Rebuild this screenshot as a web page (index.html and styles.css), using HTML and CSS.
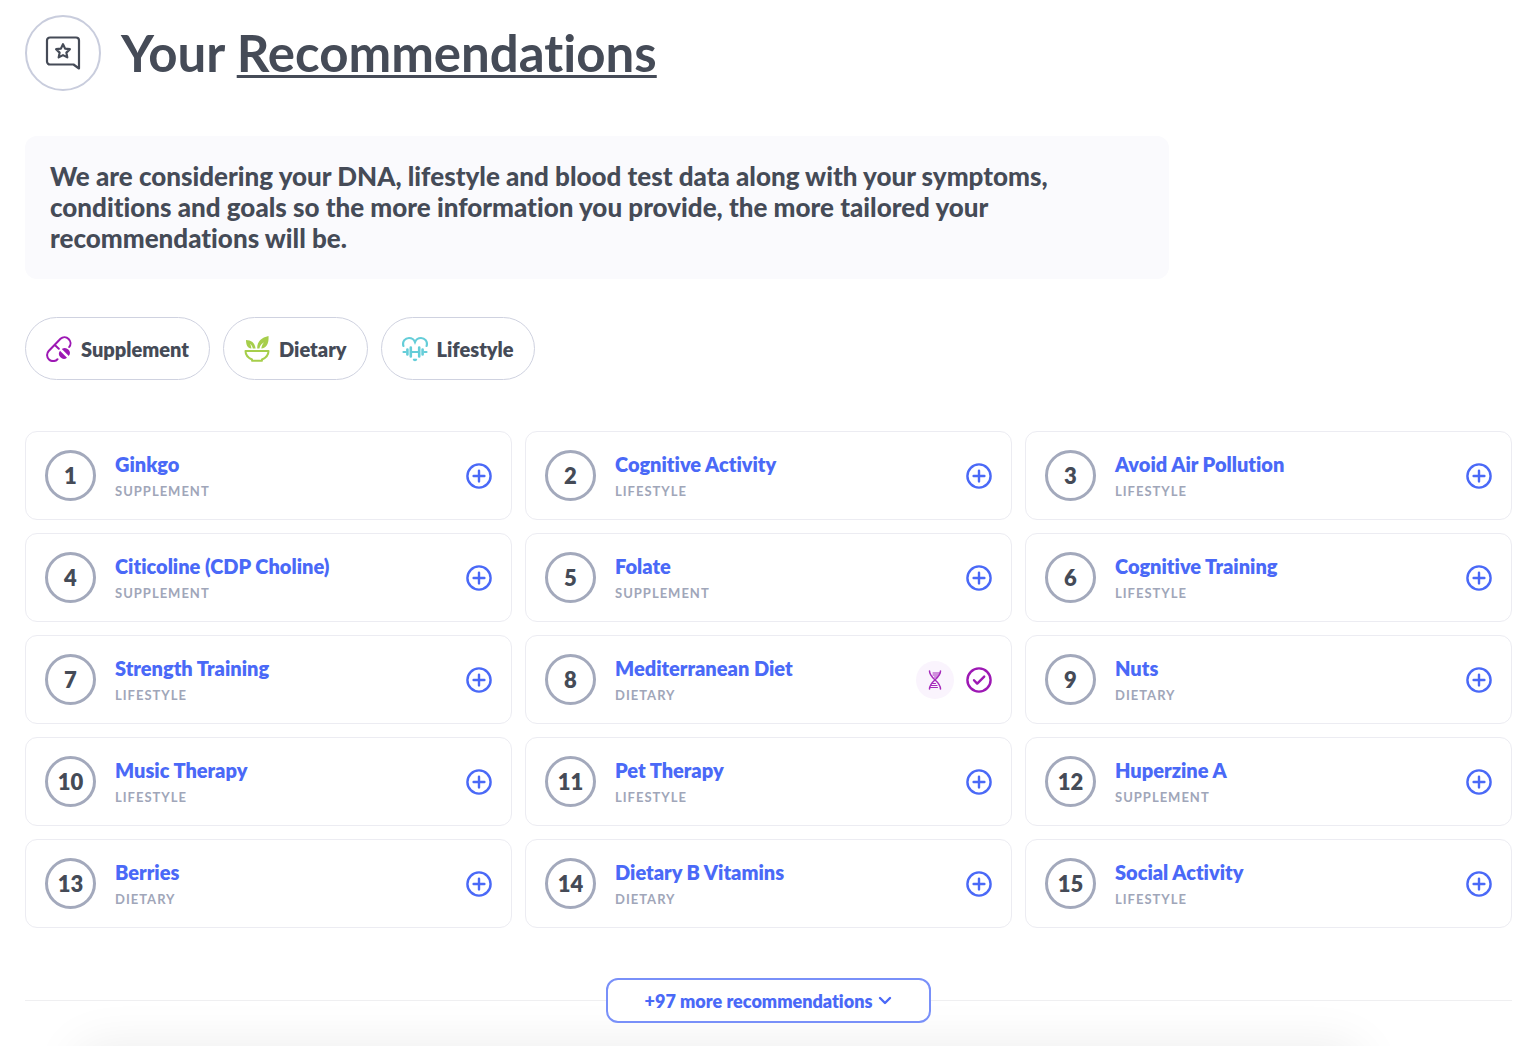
FILE: index.html
```
<!DOCTYPE html>
<html lang="en">
<head>
<meta charset="utf-8">
<title>Your Recommendations</title>
<meta name="viewport" content="width=device-width, initial-scale=1">
<link rel="stylesheet" href="styles.css">
</head>
<body>
<svg class="sprite" aria-hidden="true">
  <symbol id="plus" viewBox="0 0 26 26"><g fill="none" stroke="currentColor" stroke-width="2.4" stroke-linecap="round"><circle cx="13" cy="13" r="11.6"/><path d="M13 7.6v10.8M7.6 13h10.8"/></g></symbol>
  <symbol id="check" viewBox="0 0 26 26"><g fill="none" stroke="currentColor" stroke-width="2.4" stroke-linecap="round" stroke-linejoin="round"><circle cx="13" cy="13" r="11.6"/><path d="M8 13.200l3.200 3.400 7-7"/></g></symbol>
</svg>
<main class="page">
  <header class="heading">
    <span class="heading-icon">
      <svg width="36" height="36" viewBox="0 0 36 36" fill="none" stroke="currentColor" stroke-width="2.200" stroke-linejoin="round" aria-hidden="true">
        <path d="M5 2.500h26a3 3 0 0 1 3 3v28l-5.500-4H5a3 3 0 0 1-3-3v-21a3 3 0 0 1 3-3z"/>
        <path d="M18 9.200l2.100 4.400 4.800.6-3.500 3.400.9 4.800-4.300-2.300-4.300 2.300.9-4.800-3.500-3.400 4.800-.6z"/>
      </svg>
    </span>
    <h1 class="title">Your <span class="underlined">Recommendations</span></h1>
  </header>

  <p class="intro">We are considering your DNA, lifestyle and blood test data along with your symptoms, conditions and goals so the more information you provide, the more tailored your recommendations will be.</p>

  <div class="filters">
    <button type="button" class="filter">
      <svg class="filter-icon supplement" viewBox="0 0 26 26" aria-hidden="true">
        <g fill="none" stroke="currentColor" stroke-width="2" stroke-linecap="round"><path d="M11.500 23.200a6 6 0 0 1-8.800-8.200L14.500 2.800a6 6 0 0 1 8.700 8.200M8.800 9l4 3.800"/></g>
        <path fill="currentColor" d="M14 14.800a5 5 0 0 0 7 7zM15.800 13.100a5 5 0 0 1 7 7z"/>
      </svg>
      Supplement
    </button>
    <button type="button" class="filter">
      <svg class="filter-icon dietary" viewBox="0 0 26 26" aria-hidden="true">
        <path fill="none" stroke="currentColor" stroke-width="2" stroke-linejoin="round" d="M1.500 15h23c0 4.500-3 7-6.500 8.500v1.300H8v-1.300C4.500 22 1.500 19.500 1.500 15z"/>
        <path fill="currentColor" fill-rule="evenodd" d="M2 4c5 .2 9 2.500 9.600 8.600H8.800C8.600 10.500 7.600 9 6 8c1 1.500 1.400 3 1.400 4.600C3.500 12 2 9 2 4zM24.500 0c.5 7-1.500 12-7.200 12.600.2-2 1.200-4.500 2.700-6.300-2.400 1.300-4 3.500-4.600 6.300h-2.200C13 5.500 17.500 1.500 24.500 0z"/>
      </svg>
      Dietary
    </button>
    <button type="button" class="filter">
      <svg class="filter-icon lifestyle" viewBox="0 0 26 26" aria-hidden="true">
        <g fill="none" stroke="currentColor" stroke-width="2.200" stroke-linecap="round"><path d="M1.400 10C0 5 3.500 2 7 2c3 0 5 1.500 6 4 1-2.500 3-4 6-4 3.500 0 7 3 5.600 8M9 16h8M1.500 16h2M22.500 16h2M12 23.600q1 .8 2 0"/><path stroke-width="2.600" d="M5.400 13.500v5M8.800 11.500v9M17.200 11.500v9M20.600 13.500v5"/></g>
      </svg>
      Lifestyle
    </button>
  </div>

  <ol class="cards">
    <li class="card"><span class="rank">1</span><div class="info"><a class="name" href="#ginkgo">Ginkgo</a><span class="kind">Supplement</span></div><button type="button" class="toggle" aria-label="Add Ginkgo"><svg><use href="#plus"/></svg></button></li>
    <li class="card"><span class="rank">2</span><div class="info"><a class="name" href="#cognitive-activity">Cognitive Activity</a><span class="kind">Lifestyle</span></div><button type="button" class="toggle" aria-label="Add Cognitive Activity"><svg><use href="#plus"/></svg></button></li>
    <li class="card"><span class="rank">3</span><div class="info"><a class="name" href="#avoid-air-pollution">Avoid Air Pollution</a><span class="kind">Lifestyle</span></div><button type="button" class="toggle" aria-label="Add Avoid Air Pollution"><svg><use href="#plus"/></svg></button></li>
    <li class="card"><span class="rank">4</span><div class="info"><a class="name" href="#citicoline">Citicoline (CDP Choline)</a><span class="kind">Supplement</span></div><button type="button" class="toggle" aria-label="Add Citicoline"><svg><use href="#plus"/></svg></button></li>
    <li class="card"><span class="rank">5</span><div class="info"><a class="name" href="#folate">Folate</a><span class="kind">Supplement</span></div><button type="button" class="toggle" aria-label="Add Folate"><svg><use href="#plus"/></svg></button></li>
    <li class="card"><span class="rank">6</span><div class="info"><a class="name" href="#cognitive-training">Cognitive Training</a><span class="kind">Lifestyle</span></div><button type="button" class="toggle" aria-label="Add Cognitive Training"><svg><use href="#plus"/></svg></button></li>
    <li class="card"><span class="rank">7</span><div class="info"><a class="name" href="#strength-training">Strength Training</a><span class="kind">Lifestyle</span></div><button type="button" class="toggle" aria-label="Add Strength Training"><svg><use href="#plus"/></svg></button></li>
    <li class="card"><span class="rank">8</span><div class="info"><a class="name" href="#mediterranean-diet">Mediterranean Diet</a><span class="kind">Dietary</span></div>
      <span class="dna"><svg width="14" height="20" viewBox="0 0 14 20" fill="none" stroke="currentColor" stroke-width="1.500" stroke-linecap="round" aria-hidden="true"><path d="M1.500 1c0 8 11 9.500 11 18M12.500 1c0 8-11 9.500-11 18"/><path stroke-width="1" d="M5 3h7M5 5h6M6.500 7h3M4.500 13.500h3M3 15.500h6M2.500 17.500h7"/></svg></span>
      <button type="button" class="toggle added" aria-label="Remove Mediterranean Diet"><svg><use href="#check"/></svg></button></li>
    <li class="card"><span class="rank">9</span><div class="info"><a class="name" href="#nuts">Nuts</a><span class="kind">Dietary</span></div><button type="button" class="toggle" aria-label="Add Nuts"><svg><use href="#plus"/></svg></button></li>
    <li class="card"><span class="rank">10</span><div class="info"><a class="name" href="#music-therapy">Music Therapy</a><span class="kind">Lifestyle</span></div><button type="button" class="toggle" aria-label="Add Music Therapy"><svg><use href="#plus"/></svg></button></li>
    <li class="card"><span class="rank">11</span><div class="info"><a class="name" href="#pet-therapy">Pet Therapy</a><span class="kind">Lifestyle</span></div><button type="button" class="toggle" aria-label="Add Pet Therapy"><svg><use href="#plus"/></svg></button></li>
    <li class="card"><span class="rank">12</span><div class="info"><a class="name" href="#huperzine-a">Huperzine A</a><span class="kind">Supplement</span></div><button type="button" class="toggle" aria-label="Add Huperzine A"><svg><use href="#plus"/></svg></button></li>
    <li class="card"><span class="rank">13</span><div class="info"><a class="name" href="#berries">Berries</a><span class="kind">Dietary</span></div><button type="button" class="toggle" aria-label="Add Berries"><svg><use href="#plus"/></svg></button></li>
    <li class="card"><span class="rank">14</span><div class="info"><a class="name" href="#dietary-b-vitamins">Dietary B Vitamins</a><span class="kind">Dietary</span></div><button type="button" class="toggle" aria-label="Add Dietary B Vitamins"><svg><use href="#plus"/></svg></button></li>
    <li class="card"><span class="rank">15</span><div class="info"><a class="name" href="#social-activity">Social Activity</a><span class="kind">Lifestyle</span></div><button type="button" class="toggle" aria-label="Add Social Activity"><svg><use href="#plus"/></svg></button></li>
  </ol>

  <div class="more-row">
    <button type="button" class="more">+97 more recommendations
      <svg width="14" height="10" viewBox="0 0 14 10" fill="none" stroke="currentColor" stroke-width="2.400" stroke-linecap="round" stroke-linejoin="round" aria-hidden="true"><path d="M2 2l5 5 5-5"/></svg>
    </button>
  </div>
  <div class="next-panel"></div>
</main>
</body>
</html>
```
FILE: styles.css
```
* {
  box-sizing: border-box;
}

body {
  margin: 0;
  background: #fff;
  color: #454b57;
  font-family: Lato, "Open Sans", sans-serif;
  font-variant-ligatures: none;
}

button {
  margin: 0;
  font: inherit;
  font-variant-ligatures: none;
  color: inherit;
  background: #fff;
  cursor: pointer;
}

.sprite {
  display: none;
}

.page {
  padding: 15px 24px 0 25px;
  overflow: hidden;
}

.heading {
  display: flex;
  align-items: center;
  gap: 20px;
}

.heading-icon {
  display: flex;
  align-items: center;
  justify-content: center;
  width: 76px;
  height: 76px;
  border: 2px solid #c9cddd;
  border-radius: 50%;
}

.title {
  margin: 0;
  font-size: 51px;
  line-height: 60px;
  font-weight: 700;
}

.underlined {
  text-decoration: underline;
  text-decoration-thickness: 3px;
  text-underline-offset: 3px;
  text-decoration-skip-ink: none;
}

.intro {
  max-width: 1144px;
  margin: 45px 0 0;
  padding: 25px 100px 25px 25px;
  border-radius: 12px;
  background: #fafafd;
  font-size: 26px;
  line-height: 31px;
  font-weight: 900;
}

.filters {
  display: flex;
  flex-wrap: wrap;
  gap: 13px;
  margin-top: 38px;
}

.filter {
  display: flex;
  align-items: center;
  gap: 9px;
  height: 63px;
  padding: 0 20px;
  border: 1px solid #cfd2e0;
  border-radius: 32px;
  font-size: 20px;
  line-height: 24px;
  font-weight: 800;
}

.filter-icon {
  width: 26px;
  height: 26px;
}

.supplement {
  color: #9d18b4;
}

.dietary {
  color: #a6ce4b;
}

.lifestyle {
  color: #64cdd8;
}

.cards {
  display: grid;
  grid-template-columns: repeat(auto-fill, minmax(400px, 1fr));
  gap: 13px;
  margin: 51px 0 0;
  padding: 0;
  list-style: none;
}

.card {
  display: flex;
  align-items: center;
  height: 89px;
  padding: 0 19px;
  border: 1px solid #ececf2;
  border-radius: 12px;
}

.rank {
  display: flex;
  align-items: center;
  justify-content: center;
  width: 51px;
  height: 51px;
  border: 3px solid #a3a9bc;
  border-radius: 50%;
  font-size: 22px;
  font-weight: 800;
}

.info {
  display: flex;
  flex: 1;
  flex-direction: column;
  align-items: flex-start;
  gap: 7px;
  margin-left: 19px;
}

.name {
  color: #4a69f7;
  font-size: 20px;
  line-height: 24px;
  font-weight: 800;
  text-decoration: none;
}

.kind {
  color: #a0a6b9;
  font-size: 13px;
  line-height: 16px;
  font-weight: 700;
  letter-spacing: 1px;
  text-transform: uppercase;
}

.toggle {
  width: 26px;
  height: 26px;
  padding: 0;
  border: 0;
  border-radius: 50%;
  color: #4a69f7;
}

.toggle svg {
  display: block;
  width: 26px;
  height: 26px;
}

.added {
  color: #9d18b4;
}

.dna {
  display: flex;
  align-items: center;
  justify-content: center;
  width: 38px;
  height: 38px;
  margin-right: 12px;
  border-radius: 50%;
  background: #faf4fd;
  color: #a62bbb;
}

.more-row {
  display: flex;
  align-items: center;
  margin-top: 50px;
}

.more-row::before,
.more-row::after {
  content: "";
  flex: 1;
  height: 1px;
  background: #efeff1;
}

.more {
  display: flex;
  align-items: center;
  justify-content: center;
  gap: 6px;
  width: 325px;
  height: 45px;
  border: 2px solid #7990f9;
  border-radius: 12px;
  color: #4a69f7;
  font-size: 18px;
  line-height: 22px;
  font-weight: 800;
}

/* Top edge of the following panel, of which only the shadow shows */
.next-panel {
  height: 60px;
  margin: 23px 150px -60px 50px;
  border-radius: 24px;
  box-shadow: 0 0 50px rgba(0, 0, 0, 0.08);
}
```
